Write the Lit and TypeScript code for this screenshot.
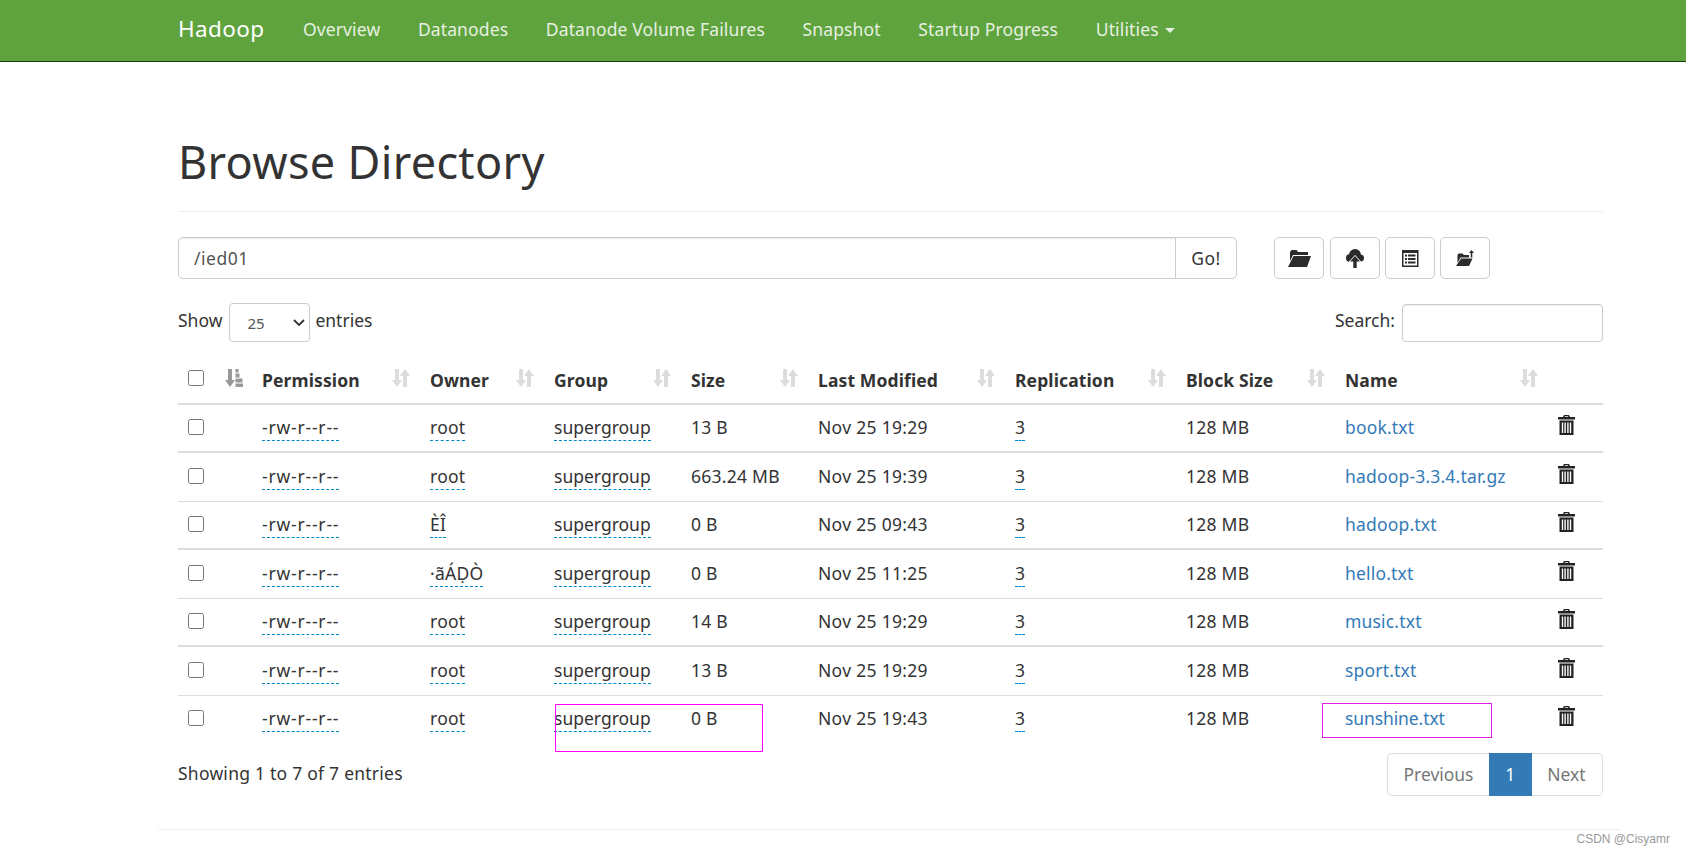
import { LitElement, html, css, svg } from "lit";
import { customElement } from "lit/decorators.js";

const rows = [
  ["root", "13 B", "Nov 25 19:29", "book.txt"],
  ["root", "663.24 MB", "Nov 25 19:39", "hadoop-3.3.4.tar.gz"],
  ["ÈÎ", "0 B", "Nov 25 09:43", "hadoop.txt"],
  ["·ãÁḌÒ", "0 B", "Nov 25 11:25", "hello.txt"],
  ["root", "14 B", "Nov 25 19:29", "music.txt"],
  ["root", "13 B", "Nov 25 19:29", "sport.txt"],
  ["root", "0 B", "Nov 25 19:43", "sunshine.txt"],
];
const heads = ["Permission", "Owner", "Group", "Size", "Last Modified", "Replication", "Block Size", "Name"];
const navs = ["Overview", "Datanodes", "Datanode Volume Failures", "Snapshot", "Startup Progress"];

const sortIcon = html`<svg class="sort" viewBox="0 0 18 18" width="18" height="18"><path d="M3 0h4v11h3l-5 7-5-7h3zM13 0l5 7h-3v11h-4V7H8z" fill="currentColor"/></svg>`;
const sortedIcon = html`<svg class="sort sorted" viewBox="0 0 18 18" width="18" height="18"><path d="M3 0h4v11h3l-5 7-5-7h3z" fill="currentColor"/><path d="M10.500 0h3v3.500h-3zM10.500 4.500h4v4h-4zM10.500 9.500h7v4h-7zM10.500 14.500h7.500v3.500h-7.500z" fill="currentColor"/></svg>`;
const trash = html`<svg class="trash" viewBox="0 0 17 20" width="17" height="20"><path fill="#222" d="M6 0h5l1 2h5v2.400H0V2h5zM7 1.300L6.700 2h3.600L10 1.300zM1.500 5.500h14V20h-14zM3.800 7.500v10.500h1.400V7.500zM6.400 7.500v10.500h1.400V7.500zM9.200 7.500v10.500h1.400V7.500zM11.800 7.500v10.500h1.400V7.500z" fill-rule="evenodd"/></svg>`;
const iFolderOpen = svg`<path fill="#2b2b2b" d="M2 2l1.500-2h5l1.500 2h10v3H5L2 11zM5.500 6H23l-4 11H0z"/>`;
const iCloud = svg`<circle cx="4" cy="9" r="4" fill="#2b2b2b"/><circle cx="9" cy="6" r="6" fill="#2b2b2b"/><circle cx="14.500" cy="9" r="3.500" fill="#2b2b2b"/><rect x="4" y="8" width="10.500" height="5" fill="#2b2b2b"/><path fill="#2b2b2b" stroke="#fff" stroke-width="1.500" paint-order="stroke" d="M9 7l5 5.500h-3.300V19H7.300v-6.500H4z"/>`;
const iList = svg`<path fill="#2b2b2b" fill-rule="evenodd" d="M0 0h16.500v17H0zM1.500 3v12.500h13.500V3z"/><path fill="#2b2b2b" d="M3 4.500h2v2H3zM6 4.500h7.500v2H6zM3 8h2v2H3zM6 8h7.500v2H6zM3 11.500h2v2H3zM6 11.500h7.500v2H6z"/>`;
const iFolderUp = svg`<path fill="#2b2b2b" d="M1.500 5l1-1.500h4L8 5h5v2.500H4.500L1.500 13zM5 8.500h11.500L13 16H0z"/><path fill="#2b2b2b" d="M15.500 0l2.500 3h-1.700v4.500h-1.600V3H13z"/>`;

@customElement("app-root")
export class AppRoot extends LitElement {
  static styles = css`
    :host { display: block; position: relative; width: 1686px; height: 854px; overflow: hidden; background: #fff; color: #333;
      font-family: "Noto Sans", "Liberation Sans", sans-serif; font-size: 17.5px; }
    * { box-sizing: border-box; }
    a { color: inherit; text-decoration: none; }
    .nav { height: 62px; background: #5fa33e; border-bottom: 1px solid #1a3d10; display: flex; align-items: center; padding: 0 0 4px 178px; color: #e6f0e0; letter-spacing: .13px; }
    .brand { font-size: 22.500px; color: #fff; margin-right: 19.500px; letter-spacing: .4px; }
    .nav a.item { padding: 0 18.800px; }
    .caret { display: inline-block; margin-left: 2px; vertical-align: middle; border-top: 5px solid #e6f0e0; border-left: 5px solid transparent; border-right: 5px solid transparent; }
    .main { width: 1425px; margin-left: 178px; }
    h1 { font-size: 45px; font-weight: 400; line-height: 49.500px; margin: 75px 0 0; padding-bottom: 24px; border-bottom: 1px solid #eee; letter-spacing: .33px; }
    .tools { display: flex; margin-top: 25.500px; height: 42px; }
    .path { width: 998px; height: 42px; border: 1px solid #ccc; border-radius: 5px 0 0 5px; padding: 0 15px; line-height: 40px; box-shadow: inset 0 1px 1px rgba(0,0,0,.075); color: #555; letter-spacing: .5px; }
    .go { width: 62px; margin-left: -1px; border: 1px solid #ccc; border-radius: 0 5px 5px 0; display: flex; align-items: center; justify-content: center; letter-spacing: .5px; }
    .btns { display: flex; gap: 5px; margin-left: 37px; }
    .btn { width: 50px; height: 42px; border: 1px solid #ccc; border-radius: 5px; display: flex; align-items: center; justify-content: center; }
    .btn:first-child { margin-right: 1px; }
    .ctrl { display: flex; align-items: center; margin-top: 24px; height: 39px; }
    .lab { padding-bottom: 5px; }
    .selwrap { position: relative; width: 81px; height: 39px; margin: 0 5px 0 7px; }
    .sel { width: 81px; height: 39px; font: 15px "Noto Sans", sans-serif; color: #555; padding-left: 17px; border: 1px solid #ccc; border-radius: 4px; background: #fff; appearance: none; }
    .chev { position: absolute; right: 5px; top: 16px; pointer-events: none; }
    .grow { flex: 1; }
    .search { width: 201px; height: 38px; margin-left: 7px; border: 1px solid #ccc; border-radius: 4px; box-shadow: inset 0 1px 1px rgba(0,0,0,.075); }
    table { width: 1425px; table-layout: fixed; border-collapse: separate; border-spacing: 0; }
    th { height: 63px; padding: 0 10px 0; text-align: left; border-bottom: 2.500px solid #ddd; vertical-align: middle; font-weight: 700; }
    .hcheck { padding-top: 10px; }
    .th { display: flex; justify-content: space-between; align-items: center; padding-top: 14px; letter-spacing: .12px; }
    .th svg { margin-top: -4px; }
    .hsort { padding-top: 10px; }
    .sort { color: #dcdcdc; flex: none; display: block; }
    .sorted { color: #999; }
    td { padding: 0 10px 2px; vertical-align: middle; white-space: nowrap; letter-spacing: .25px; }
    tr:nth-child(odd) td { height: 48px; border-bottom: 2px solid #ddd; }
    tr:nth-child(even) td { height: 49px; border-bottom: 1px solid #ddd; }
    tr:last-child td { border-bottom: 0; padding-bottom: 4px; }
    tr:last-child .link { letter-spacing: -.1px; }
    input[type=checkbox] { width: 16px; height: 16px; margin: 0; display: block; }
    .ed { border-bottom: 1px dashed #08c; padding-bottom: 1px; }
    .perm { letter-spacing: .8px; }
    .grp { letter-spacing: 0; }
    .date { letter-spacing: .3px; }
    .link { color: #337ab7; letter-spacing: .18px; }
    .foot { display: flex; align-items: center; justify-content: space-between; margin-top: 9px; height: 43px; }
    .show { padding-bottom: 3px; letter-spacing: .24px; }
    .pager { display: flex; height: 43px; border: 1px solid #ddd; border-radius: 5px; color: #777; }
    .pager span { display: flex; align-items: center; padding: 0 15.500px 2px; letter-spacing: -.05px; }
    .pager span:last-child { padding-right: 16.500px; }
    .pager .on { background: #337ab7; color: #fff; margin: -1px 0; padding: 0 16.500px 2px; }
    .rule { position: absolute; left: 158px; top: 829px; width: 1463px; border-top: 1px solid #eee; }
    .mark { position: absolute; right: 16px; top: 832px; font: 12px "Liberation Sans", sans-serif; color: #999; }
    .box { position: absolute; border: 1px solid #f0f; }
    .b1 { left: 555px; top: 704px; width: 208px; height: 48px; }
    .b2 { left: 1322px; top: 703px; width: 170px; height: 35px; border-color: #e020e0; }
  `;
  render() {
    return html`
      <div class="nav">
        <a class="brand">Hadoop</a>
        ${navs.map((n) => html`<a class="item">${n}</a>`)}
        <a class="item">Utilities <span class="caret"></span></a>
      </div>
      <div class="main">
        <h1>Browse Directory</h1>
        <div class="tools">
          <div class="path">/ied01</div>
          <div class="go">Go!</div>
          <div class="btns">
            <div class="btn"><svg width="23" height="17" viewBox="0 0 23 17">${iFolderOpen}</svg></div>
            <div class="btn"><svg width="19" height="19" viewBox="0 0 19 19">${iCloud}</svg></div>
            <div class="btn"><svg width="17" height="17" viewBox="0 0 17 17">${iList}</svg></div>
            <div class="btn"><svg width="18" height="16" viewBox="0 0 18 16">${iFolderUp}</svg></div>
          </div>
        </div>
        <div class="ctrl">
          <span class="lab">Show</span>
          <div class="selwrap">
            <select class="sel"><option>25</option></select>
            <svg class="chev" width="12" height="8" viewBox="0 0 12 8"><path d="M1 1l5 5 5-5" fill="none" stroke="#333" stroke-width="1.800"/></svg>
          </div>
          <span class="lab">entries</span>
          <span class="grow"></span>
          <span class="lab">Search:</span>
          <div class="search"></div>
        </div>
        <table>
          <colgroup>
            <col style="width:37px" /><col style="width:37px" /><col style="width:168px" /><col style="width:124px" />
            <col style="width:137px" /><col style="width:127px" /><col style="width:197px" /><col style="width:171px" />
            <col style="width:159px" /><col style="width:213px" /><col style="width:55px" />
          </colgroup>
          <thead>
            <tr>
              <th class="hcheck"><input type="checkbox" /></th>
              <th class="hsort">${sortedIcon}</th>
              ${heads.map((h) => html`<th><div class="th"><span>${h}</span>${sortIcon}</div></th>`)}
              <th></th>
            </tr>
          </thead>
          <tbody>
            ${rows.map((r) => html`<tr>
              <td><input type="checkbox" /></td>
              <td></td>
              <td><span class="ed perm">-rw-r--r--</span></td>
              <td><span class="ed">${r[0]}</span></td>
              <td><span class="ed grp">supergroup</span></td>
              <td>${r[1]}</td>
              <td class="date">${r[2]}</td>
              <td><span class="ed">3</span></td>
              <td>128 MB</td>
              <td><a class="link">${r[3]}</a></td>
              <td>${trash}</td>
            </tr>`)}
          </tbody>
        </table>
        <div class="foot">
          <span class="show">Showing 1 to 7 of 7 entries</span>
          <div class="pager"><span>Previous</span><span class="on">1</span><span>Next</span></div>
        </div>
      </div>
      <div class="rule"></div>
      <div class="mark">CSDN @Cisyamr</div>
      <div class="box b1"></div>
      <div class="box b2"></div>
    `;
  }
}
